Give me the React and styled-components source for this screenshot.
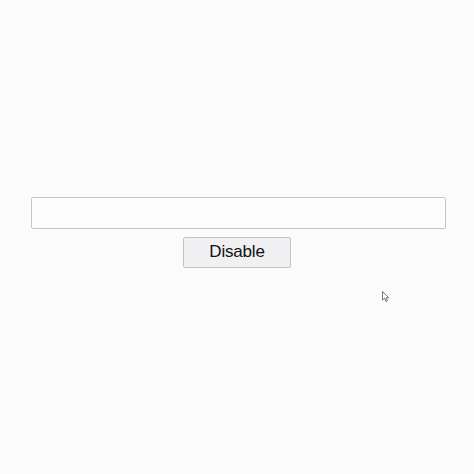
import React from 'react';
import styled, { createGlobalStyle } from 'styled-components';

const GlobalStyle = createGlobalStyle`
  html, body {
    margin: 0;
    padding: 0;
    background: #fbfbfc;
  }
`;

const Page = styled.div`
  position: relative;
  min-height: 100vh;
  display: flex;
  flex-direction: column;
  align-items: center;
  justify-content: center;
  gap: 8px;
  padding-bottom: 10px;
  box-sizing: border-box;
  font-family: 'Liberation Sans', Arial, sans-serif;
`;

const TextField = styled.input`
  width: 415px;
  height: 32px;
  box-sizing: border-box;
  border: 1px solid #c6c6c8;
  border-radius: 2px;
  background: #fdfdfd;
  outline: none;
  margin-left: 3px;
`;

const Button = styled.button`
  width: 108px;
  height: 31px;
  box-sizing: border-box;
  border: 1px solid #c3c3c5;
  border-radius: 2px;
  background: #f0eff1;
  color: #111;
  font-family: 'Liberation Sans', Arial, sans-serif;
  font-size: 17px;
  letter-spacing: -0.2px;
  padding: 0;
`;

const Cursor = styled.svg`
  position: absolute;
  left: 382px;
  top: 291px;
  width: 8px;
  height: 12px;
`;

export default function App() {
  return (
    <>
      <GlobalStyle />
      <Page>
        <TextField type="text" />
        <Button>Disable</Button>
        <Cursor viewBox="0 0 8 12">
          <path d="M0.5 0.5 L0.5 9 L2.6 7.2 L4 10.5 L5.3 10 L4 6.8 L6.8 6.8 Z" fill="#fff" stroke="#555" strokeWidth="0.8" />
        </Cursor>
      </Page>
    </>
  );
}
